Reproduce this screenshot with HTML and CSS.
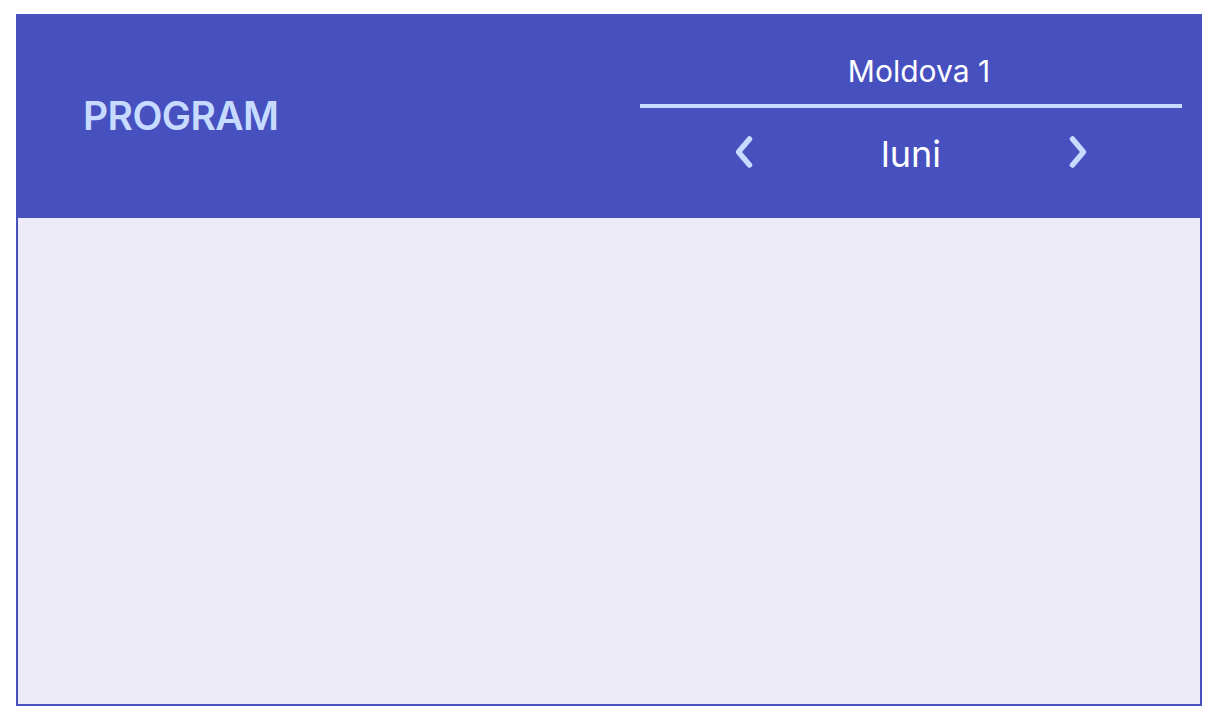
FILE: index.html
```html
<!DOCTYPE html>
<html lang="ro">
<head>
<meta charset="utf-8">
<title>Program</title>
<link rel="stylesheet" href="styles.css">
</head>
<body>
<div class="frame">
  <header class="top">
    <h1 class="title">PROGRAM</h1>
    <div class="channel">
      <div class="channel-name">Moldova 1</div>
      <div class="day-nav">
        <button class="nav-btn" aria-label="Ziua precedentă">
          <svg width="22" height="34" viewBox="0 0 22 34"><path d="M16.5 4 L5.5 17 L16.5 30" fill="none" stroke="currentColor" stroke-width="5.5" stroke-linecap="round" stroke-linejoin="round"/></svg>
        </button>
        <span class="day">luni</span>
        <button class="nav-btn" aria-label="Ziua următoare">
          <svg width="22" height="34" viewBox="0 0 22 34"><path d="M5.5 4 L16.5 17 L5.5 30" fill="none" stroke="currentColor" stroke-width="5.5" stroke-linecap="round" stroke-linejoin="round"/></svg>
        </button>
      </div>
    </div>
  </header>
  <main class="content"></main>
</div>
</body>
</html>
```

FILE: styles.css
```css
* { box-sizing: border-box; }
html, body { margin: 0; padding: 0; background: #ffffff; }
body {
  padding: 14px 16px 12px 16px;
  font-family: Inter, "Noto Sans", "Liberation Sans", sans-serif;
}
.frame {
  height: 692px;
  border: 2px solid #4650bf;
  background: #ecebf7;
  display: flex;
  flex-direction: column;
}
.top {
  height: 202px;
  background: #4650bf;
  display: flex;
  justify-content: space-between;
  align-items: stretch;
}
.title {
  margin: 0;
  align-self: center;
  padding: 0 0 3px 65px;
  font-size: 39px;
  font-weight: 600;
  color: #c6dbff;
  letter-spacing: -0.6px;
}
.channel {
  width: 542px;
  margin-right: 18px;
  padding-top: 37px;
  display: flex;
  flex-direction: column;
}
.channel-name {
  height: 36px;
  line-height: 36px;
  font-size: 30px;
  color: #ffffff;
  text-align: center;
  padding-left: 16px;
}
.day-nav {
  margin-top: 15px;
  border-top: 4px solid #c6dbff;
  padding-top: 24px;
  display: flex;
  align-items: center;
  justify-content: center;
}
.day {
  width: 312px;
  text-align: center;
  font-size: 36px;
  line-height: 44px;
  color: #ffffff;
}
.nav-btn {
  background: none;
  border: 0;
  padding: 0;
  margin-bottom: 4px;
  width: 22px;
  height: 34px;
  color: #c6dbff;
  display: flex;
  cursor: pointer;
}
.content { flex: 1; }
```
